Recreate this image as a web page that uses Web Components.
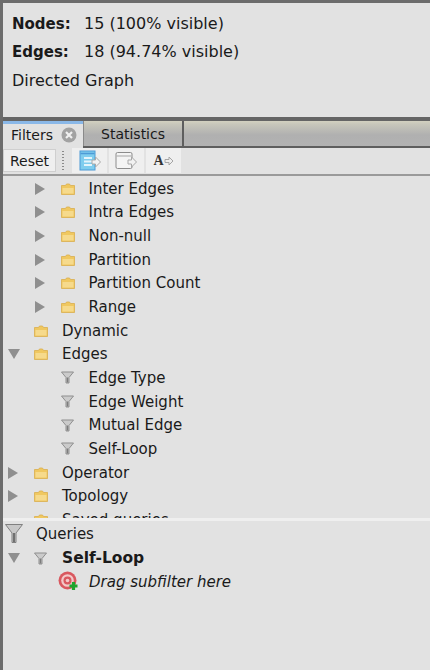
<!DOCTYPE html>
<html>
<head>
<meta charset="utf-8">
<style>
  html, body { margin: 0; height: 100%; background: #e2e2e2; overflow: hidden; }
  body { font-family: "DejaVu Sans", sans-serif; font-size: 15px; color: #1a1a1a; }
  graph-app { height: 670px; }
</style>
</head>
<body>
<graph-app>
  <stats-panel></stats-panel>
  <filter-tabs></filter-tabs>
  <filter-toolbar></filter-toolbar>
  <filter-tree>
    <tree-row depth="1" toggle="closed" icon="folder">Inter Edges</tree-row>
    <tree-row depth="1" toggle="closed" icon="folder">Intra Edges</tree-row>
    <tree-row depth="1" toggle="closed" icon="folder">Non-null</tree-row>
    <tree-row depth="1" toggle="closed" icon="folder">Partition</tree-row>
    <tree-row depth="1" toggle="closed" icon="folder">Partition Count</tree-row>
    <tree-row depth="1" toggle="closed" icon="folder">Range</tree-row>
    <tree-row depth="0" icon="folder">Dynamic</tree-row>
    <tree-row depth="0" toggle="open" icon="folder">Edges</tree-row>
    <tree-row depth="1" icon="funnel">Edge Type</tree-row>
    <tree-row depth="1" icon="funnel">Edge Weight</tree-row>
    <tree-row depth="1" icon="funnel">Mutual Edge</tree-row>
    <tree-row depth="1" icon="funnel">Self-Loop</tree-row>
    <tree-row depth="0" toggle="closed" icon="folder">Operator</tree-row>
    <tree-row depth="0" toggle="closed" icon="folder">Topology</tree-row>
    <tree-row depth="0" icon="folder">Saved queries</tree-row>
  </filter-tree>
  <queries-panel></queries-panel>
</graph-app>

<script>
// --- app frame ---
class GraphApp extends HTMLElement {
  constructor() {
    super();
    this.attachShadow({ mode: 'open' }).innerHTML = `
      <style>
        :host { display: flex; flex-direction: column; border-left: 3px solid #6c6c6c; box-sizing: border-box; }
      </style>
      <slot></slot>`;
  }
}
customElements.define('graph-app', GraphApp);

// --- graph stats at the top ---
class StatsPanel extends HTMLElement {
  constructor() {
    super();
    this.attachShadow({ mode: 'open' }).innerHTML = `
      <style>
        :host { display: block; height: 121px; box-sizing: border-box; border-top: 3px solid #6c6c6c; border-bottom: 4px solid #656565; padding: 8.5px 0 0 9px; background: #e2e2e2; font-size: 16px; }
        div { height: 28.6px; line-height: 24px; white-space: nowrap; }
        b { display: inline-block; width: 72px; font-size: 15px; }
      </style>
      <div><b>Nodes:</b>15 (100% visible)</div>
      <div><b>Edges:</b>18 (94.74% visible)</div>
      <div>Directed Graph</div>`;
  }
}
customElements.define('stats-panel', StatsPanel);

// --- Filters / Statistics tabs ---
class FilterTabs extends HTMLElement {
  constructor() {
    super();
    this.attachShadow({ mode: 'open' }).innerHTML = `
      <style>
        :host { display: flex; height: 27px; box-sizing: border-box; font-size: 14px; background: linear-gradient(#d3d1c0 0, #c8c7bb 3px, #b0b0b0 14px, #b2b2b2 100%); border-bottom: 2px solid #5e5e5e; }
        .active { width: 80px; height: 27px; flex: none; box-sizing: border-box; background: #e2e2e2; border-top: 3px solid #8ab8e8; display: flex; align-items: center; padding: 0 0 2px 8px; gap: 8px; }
        .active svg { flex: none; }
        .tab { width: 101px; box-sizing: border-box; border-right: 2px solid #5e5e5e; border-left: 1px solid #8a8a8a; display: flex; align-items: center; justify-content: center; }
      </style>
      <div class="active">Filters
        <svg width="16" height="16" viewBox="0 0 16 16"><circle cx="8" cy="8" r="7.5" fill="#a2a2a2"/><path d="M5 5l6 6M11 5l-6 6" stroke="#f0f0f0" stroke-width="2.2"/></svg>
      </div>
      <div class="tab">Statistics</div>`;
  }
}
customElements.define('filter-tabs', FilterTabs);

// --- Reset button and the three export buttons ---
class FilterToolbar extends HTMLElement {
  constructor() {
    super();
    this.attachShadow({ mode: 'open' }).innerHTML = `
      <style>
        :host { display: flex; align-items: center; height: 28px; box-sizing: border-box; border-bottom: 2px solid #9a9a9a; padding-bottom: 1px; font-size: 14px; background: #e2e2e2; }
        .reset { width: 53px; height: 23px; box-sizing: border-box; background: #efefef; border: 1px solid #cfcfcf; display: flex; align-items: center; justify-content: center; }
        .grip { width: 2px; height: 19px; margin: 0 8px 0 6px; background: repeating-linear-gradient(#8a8a8a 0 1px, transparent 1px 3px); }
        .btn { width: 35px; height: 25px; margin-right: 2px; background: #efefef; display: flex; align-items: center; justify-content: center; }
      </style>
      <div class="reset">Reset</div>
      <div class="grip"></div>
      <div class="btn">
        <svg width="22" height="21" viewBox="0 0 22 21">
          <rect x="1" y="1" width="15" height="19" fill="#7fcdee" stroke="#4d9ad6"/>
          <path d="M1.500 3.500h14" stroke="#4d9ad6" stroke-width="1.500"/>
          <path d="M5 8h8M5 11.500h8M5 15h8" stroke="#e4f4fb" stroke-width="2"/>
          <path d="M13 10h3.500V7l5 5-5 5v-3H13z" fill="#f2f2f2" stroke="#a8a8a8"/>
        </svg>
      </div>
      <div class="btn">
        <svg width="23" height="19" viewBox="0 0 23 19">
          <rect x="1" y="1.500" width="16" height="16" rx="1.500" fill="#f4f4f4" stroke="#8c8c8c"/>
          <path d="M1.500 5h15" stroke="#a5a5a5"/>
          <path d="M13 9h3.500V6l5 5-5 5v-3H13z" fill="#f2f2f2" stroke="#a8a8a8"/>
        </svg>
      </div>
      <div class="btn">
        <span style="font:bold 14px 'Liberation Serif',serif;color:#333">A</span>
        <svg width="10" height="12" viewBox="0 0 10 12"><path d="M1 4.500h4V2l4 4-4 4V7.500H1z" fill="#eee" stroke="#a5a5a5"/></svg>
      </div>`;
  }
}
customElements.define('filter-toolbar', FilterToolbar);

// --- shared icons ---
const ICONS = {
  folder: `<svg width="14" height="12" viewBox="0 0 14 12">
      <path d="M.5 2.500h4l1-1.500h3l1 1.500h4v9H.5z" fill="#f0c860" stroke="#d9ad4c" stroke-width=".8"/>
      <path d="M1.500 5h11v5.500h-11z" fill="#f6da8c"/>
    </svg>`,
  funnel: `<svg width="13" height="13" viewBox="0 0 13 13">
      <path d="M.5 1h12L8 6.500V12H5V6.500z" fill="#cbcbcb" stroke="#8f8f8f"/>
      <path d="M6.500 6.500V11.500" stroke="#7c7c7c" stroke-width="1.500"/>
    </svg>`
};

// --- single row of the filter tree ---
class TreeRow extends HTMLElement {
  constructor() {
    super();
    this.attachShadow({ mode: 'open' });
  }

  connectedCallback() {
    const left = this.getAttribute('depth') === '1' ? 31.5 : 5;
    const toggle = this.getAttribute('toggle');
    let arrow = '';
    if (toggle === 'closed') arrow = '<path d="M0 0l10 6-10 6z" fill="#8f8f8f"/>';
    if (toggle === 'open') arrow = '<path d="M0 1h12l-6 10z" fill="#8f8f8f"/>';
    this.shadowRoot.innerHTML = `
      <style>
        :host { display: flex; align-items: center; height: 23.65px; padding-left: ${left}px; white-space: nowrap; }
        .arrow { width: 12px; height: 12px; flex: none; margin-right: 14px; }
        .icon { width: 14px; height: 13px; flex: none; margin-right: 14px; display: flex; align-items: center; justify-content: center; }
      </style>
      <svg class="arrow" viewBox="0 0 12 12">${arrow}</svg>
      <span class="icon">${ICONS[this.getAttribute('icon')]}</span>
      <slot></slot>`;
  }
}
customElements.define('tree-row', TreeRow);

class FilterTree extends HTMLElement {
  constructor() {
    super();
    this.attachShadow({ mode: 'open' }).innerHTML = `
      <style>
        :host { display: block; height: 342px; overflow: hidden; padding-top: 1px; box-sizing: border-box; background: #e2e2e2; }
      </style>
      <slot></slot>`;
  }
}
customElements.define('filter-tree', FilterTree);

// --- queries panel at the bottom ---
class QueriesPanel extends HTMLElement {
  constructor() {
    super();
    this.attachShadow({ mode: 'open' }).innerHTML = `
      <style>
        :host { display: block; flex: 1; border-top: 3px solid #efefef; background: #e2e2e2; white-space: nowrap; }
        .row { display: flex; align-items: center; height: 23.4px; }
        .head { height: 25.5px; padding-left: 2px; gap: 13px; }
        .query { padding-left: 5px; font-weight: bold; font-size: 15.5px; }
        .query .arrow { margin-right: 14px; flex: none; }
        .query .funnel { margin-right: 15px; display: flex; }
        .drag { padding-left: 55px; font-style: italic; gap: 10px; }
      </style>
      <div class="row head">
        <svg width="18" height="21" viewBox="0 0 18 21">
          <path d="M.5 1.500h17L11 10v9.500H7V10z" fill="#c8c8c8" stroke="#808080"/>
          <path d="M9 10v9" stroke="#707070" stroke-width="2"/>
        </svg>
        Queries
      </div>
      <div class="row query">
        <svg class="arrow" width="12" height="12" viewBox="0 0 12 12"><path d="M0 1h12l-6 10z" fill="#8f8f8f"/></svg>
        <span class="funnel">${ICONS.funnel}</span>
        Self-Loop
      </div>
      <div class="row drag">
        <svg width="21" height="21" viewBox="0 0 21 21">
          <circle cx="9.500" cy="9.500" r="9" fill="#d9585f"/>
          <circle cx="9.500" cy="9.500" r="6.300" fill="#f3c9c9"/>
          <circle cx="9.500" cy="9.500" r="4" fill="#d9585f"/>
          <circle cx="9.500" cy="9.500" r="1.800" fill="#f3c9c9"/>
          <path d="M15.500 11v8M11.500 15h8" stroke="#1fa32e" stroke-width="3.200"/>
        </svg>
        Drag subfilter here
      </div>`;
  }
}
customElements.define('queries-panel', QueriesPanel);
</script>
</body>
</html>
